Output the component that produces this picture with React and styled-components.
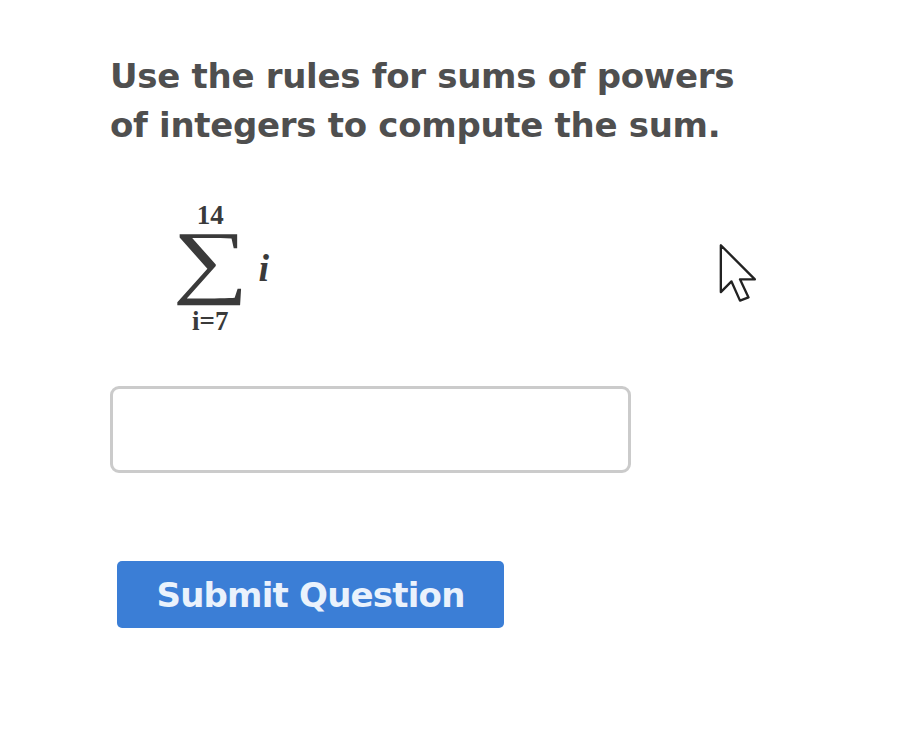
import React from "react";
import styled, { createGlobalStyle } from "styled-components";

const Global = createGlobalStyle`
  html, body {
    margin: 0;
    padding: 0;
    background: #fff;
  }
  body {
    font-family: "DejaVu Sans", Verdana, sans-serif;
  }
`;

const Page = styled.div`
  position: relative;
  width: 908px;
  height: 752px;
  padding: 52px 0 0 110px;
  box-sizing: border-box;
`;

const Prompt = styled.p`
  margin: 0;
  width: 645px;
  font-size: 34px;
  font-weight: bold;
  line-height: 49px;
  color: #4f4f4f;
  letter-spacing: -0.3px;
`;

const SumBlock = styled.div`
  display: flex;
  align-items: center;
  margin: 52px 0 0 71px;
  font-family: "Liberation Serif", "Times New Roman", serif;
  font-weight: bold;
  color: #3a3a3a;
`;

const Limits = styled.div`
  display: flex;
  flex-direction: column;
  align-items: center;
`;

const Small = styled.span`
  font-size: 27px;
  line-height: 26px;
  margin-bottom: ${(p) => (p.$top ? "10px" : "0")};
`;

const Sigma = styled.span`
  display: inline-block;
  font-size: 82px;
  line-height: 70px;
  font-weight: normal;
  transform: translateY(-12px) scaleX(1.3);
`;

const Term = styled.span`
  font-size: 38px;
  font-style: italic;
  margin-left: 19px;
`;

const Answer = styled.input`
  display: block;
  margin-top: 52px;
  width: 521px;
  height: 87px;
  box-sizing: border-box;
  border: 3px solid #cbcbcb;
  border-radius: 9px;
  background: #fff;
  outline: none;
`;

const Submit = styled.button`
  display: block;
  margin: 88px 0 0 7px;
  width: 387px;
  height: 67px;
  border: none;
  border-radius: 5px;
  background: #3b7ed6;
  color: #eaf2fc;
  font-family: "DejaVu Sans", Verdana, sans-serif;
  font-size: 34px;
  font-weight: bold;
  letter-spacing: -0.8px;
  padding: 0;
`;

const Cursor = styled.svg`
  position: absolute;
  left: 716px;
  top: 241px;
`;

export default function App() {
  return (
    <Page>
      <Global />
      <Prompt>
        Use the rules for sums of powers of integers to compute the sum.
      </Prompt>
      <SumBlock>
        <Limits>
          <Small $top>14</Small>
          <Sigma>∑</Sigma>
          <Small>i=7</Small>
        </Limits>
        <Term>i</Term>
      </SumBlock>
      <Answer type="text" />
      <Submit>Submit Question</Submit>
      <Cursor width="48" height="66" viewBox="0 0 22 31">
        <path
          d="M2 2 L2 24 L7 19 L11 28 L15 26.5 L11 18 L18 18 Z"
          fill="#fff"
          stroke="#222"
          strokeWidth="1.1"
          strokeLinejoin="round"
        />
      </Cursor>
    </Page>
  );
}
